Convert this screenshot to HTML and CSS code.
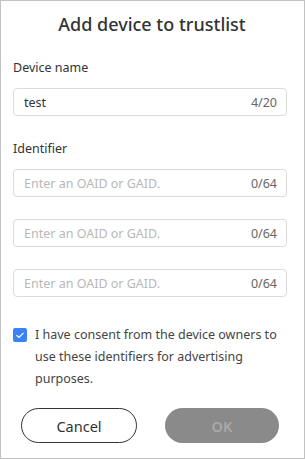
FILE: index.html
```html
<!DOCTYPE html>
<html lang="en">
<head>
<link rel="stylesheet" href="styles.css">
</head>
<body>
  <div class="dialog">
    <h2 class="dialog-title">Add device to trustlist</h2>

    <div class="field">
      <label class="field-label">Device name</label>
      <div class="input-box">
        <span class="input-value">test</span>
        <span class="input-count">4/20</span>
      </div>
    </div>

    <div class="field">
      <label class="field-label">Identifier</label>
      <div class="input-list">
        <div class="input-box">
          <span class="input-placeholder">Enter an OAID or GAID.</span>
          <span class="input-count">0/64</span>
        </div>
        <div class="input-box">
          <span class="input-placeholder">Enter an OAID or GAID.</span>
          <span class="input-count">0/64</span>
        </div>
        <div class="input-box">
          <span class="input-placeholder">Enter an OAID or GAID.</span>
          <span class="input-count">0/64</span>
        </div>
      </div>
    </div>

    <div class="consent">
      <span class="checkbox">
        <svg viewBox="0 0 14 14" width="14" height="14">
          <path d="M3.5 7.2 L6 9.5 L10.5 4.8" fill="none" stroke="#fff" stroke-width="1.2"/>
        </svg>
      </span>
      <p class="consent-text">I have consent from the device owners to use these identifiers for advertising purposes.</p>
    </div>

    <div class="actions">
      <button class="btn btn-cancel">Cancel</button>
      <button class="btn btn-ok" disabled>OK</button>
    </div>
  </div>
</body>
</html>
```

FILE: styles.css
```css
html, body {
  margin: 0;
  padding: 0;
  background: #fff;
}

body {
  font-family: "Noto Sans", "Open Sans", sans-serif;
  color: #333;
}

.dialog {
  box-sizing: border-box;
  width: 305px;
  height: 459px;
  border: 1px solid #c2c2c2;
  padding: 10px 17px 0 12px;
}

.dialog-title {
  margin: 0;
  text-align: center;
  font-size: 18px;
  font-weight: 500;
  line-height: 26px;
  color: #333;
  padding-left: 4px;
}

.field {
  margin-top: 22px;
}

.field + .field {
  margin-top: 24px;
}

.field-label {
  display: block;
  font-size: 12.5px;
  line-height: 18px;
  color: #333;
  margin-bottom: 11px;
}

.input-list {
  display: flex;
  flex-direction: column;
  gap: 22px;
}

.input-box {
  box-sizing: border-box;
  height: 28px;
  border: 1px solid #dcdcdc;
  border-radius: 4px;
  display: flex;
  align-items: center;
  justify-content: space-between;
  padding: 0 9px 0 10px;
  font-size: 12.5px;
}

.input-value {
  color: #333;
}

.input-placeholder {
  color: #b8b8b8;
}

.input-count {
  color: #666;
}

.consent {
  display: flex;
  gap: 8px;
  margin-top: 30px;
}

.checkbox {
  flex: none;
  width: 14px;
  height: 14px;
  margin-top: 1px;
  border-radius: 2px;
  background: #3a82f7;
  display: flex;
}

.consent-text {
  margin: -3px 0 0;
  font-size: 12.5px;
  line-height: 22px;
  color: #444;
}

.actions {
  display: flex;
  justify-content: space-between;
  padding: 0 8px 0 8px;
  margin-top: 18px;
}

.btn {
  box-sizing: border-box;
  width: 116px;
  height: 35px;
  border-radius: 18px;
  font-family: inherit;
  font-size: 14.5px;
}

.btn-cancel {
  background: #fff;
  border: 1px solid #333;
  color: #333;
}

.btn-ok {
  width: 114px;
  background: #8a8a8a;
  border: none;
  color: #a9a9a9;
  font-weight: 600;
}
```
